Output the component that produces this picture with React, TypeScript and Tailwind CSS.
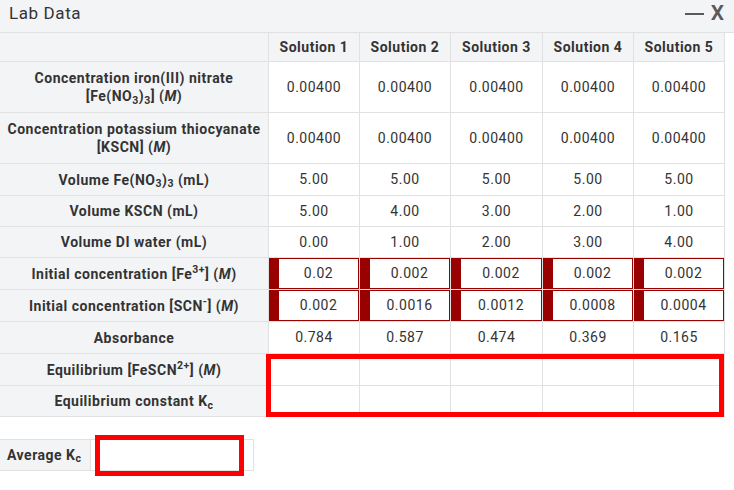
import React from "react";

type Row = {
  label: React.ReactNode;
  values: string[];
  kind?: "text" | "input" | "empty";
};

const M = <i>M</i>;

const ROWS: Row[] = [
  {
    label: (
      <>
        Concentration iron(III) nitrate
        <br />
        [Fe(NO<sub>3</sub>)<sub>3</sub>] ({M})
      </>
    ),
    values: ["0.00400", "0.00400", "0.00400", "0.00400", "0.00400"],
  },
  {
    label: (
      <>
        Concentration potassium thiocyanate
        <br />
        [KSCN] ({M})
      </>
    ),
    values: ["0.00400", "0.00400", "0.00400", "0.00400", "0.00400"],
  },
  {
    label: (
      <>
        Volume Fe(NO<sub>3</sub>)<sub>3</sub> (mL)
      </>
    ),
    values: ["5.00", "5.00", "5.00", "5.00", "5.00"],
  },
  { label: "Volume KSCN (mL)", values: ["5.00", "4.00", "3.00", "2.00", "1.00"] },
  { label: "Volume DI water (mL)", values: ["0.00", "1.00", "2.00", "3.00", "4.00"] },
  {
    label: (
      <>
        Initial concentration [Fe<sup>3+</sup>] ({M})
      </>
    ),
    values: ["0.02", "0.002", "0.002", "0.002", "0.002"],
    kind: "input",
  },
  {
    label: (
      <>
        Initial concentration [SCN<sup>-</sup>] ({M})
      </>
    ),
    values: ["0.002", "0.0016", "0.0012", "0.0008", "0.0004"],
    kind: "input",
  },
  { label: "Absorbance", values: ["0.784", "0.587", "0.474", "0.369", "0.165"] },
  {
    label: (
      <>
        Equilibrium [FeSCN<sup>2+</sup>] ({M})
      </>
    ),
    values: ["", "", "", "", ""],
    kind: "empty",
  },
  {
    label: (
      <>
        Equilibrium constant K<sub>c</sub>
      </>
    ),
    values: ["", "", "", "", ""],
    kind: "empty",
  },
];

const cell = "border-r border-b border-[#e1e1e1] flex items-center justify-center text-center";
const txt = "text-[14px] tracking-[0.5px]";

function ValueCell({ value, kind }: { value: string; kind?: Row["kind"] }) {
  if (kind === "input") {
    return (
      <div className="border-r border-b border-[#e1e1e1] flex">
        <div className={`flex-1 flex items-center justify-center bg-white border border-l-[10px] border-[#990000] ${txt}`}>
          {value}
        </div>
      </div>
    );
  }
  return <div className={`${cell} bg-white ${txt}`}>{value}</div>;
}

export default function App() {
  return (
    <div className="relative w-[734px] h-[490px] bg-white text-[#333] font-['Roboto',sans-serif] overflow-hidden">
      {/* barre de titre */}
      <div className="h-[33px] flex items-start justify-between bg-[#f3f4f6] border-b border-[#e1e1e1] pl-[9px] pr-[10px]">
        <span className="text-[17px] tracking-[0.6px] leading-[26px] text-[#333]">Lab Data</span>
        <span className="flex items-center gap-[7px] text-[#5a5a5a] leading-[24px] pt-[1px]">
          <span className="block w-[19px] h-[2px] bg-[#5a5a5a] mt-[1px]" />
          <span className="text-[21px] font-semibold">X</span>
        </span>
      </div>

      {/* tableau */}
      <div className="relative w-[725px]">
        <div className="grid grid-cols-[269px_91px_91px_92px_91px_91px] grid-rows-[29px_51px_51px_32px_31px_31px_32px_32px_32px_32px_31px]">
          <div className={`${cell} bg-[#f3f4f6]`} />
          {[1, 2, 3, 4, 5].map((n) => (
            <div key={n} className={`${cell} bg-[#f3f4f6] ${txt} font-bold`}>
              Solution {n}
            </div>
          ))}
          {ROWS.map((r, i) => (
            <React.Fragment key={i}>
              <div className={`${cell} bg-[#f3f4f6] ${txt} font-bold leading-[18px]`}>
                <span>{r.label}</span>
              </div>
              {r.values.map((v, j) => (
                <ValueCell key={j} value={v} kind={r.kind} />
              ))}
            </React.Fragment>
          ))}
        </div>
        {/* cadre d'annotation rouge */}
        <div className="absolute left-[266px] top-[321px] w-[458px] h-[63px] border-[5px] border-[#ff0000]" />
      </div>

      {/* Average Kc */}
      <div className="relative mt-[22px] flex w-[254px] h-[32px] border-t border-b border-r border-[#e1e1e1]">
        <div className={`w-[91px] flex items-center pl-[7px] bg-[#f3f4f6] border-r border-[#e1e1e1] ${txt} font-bold`}>
          <span>
            Average K<sub>c</sub>
          </span>
        </div>
        <div className="flex-1 bg-white" />
        <div className="absolute left-[95px] top-[-5px] w-[149px] h-[41px] border-[5px] border-[#ff0000]" />
      </div>
    </div>
  );
}
